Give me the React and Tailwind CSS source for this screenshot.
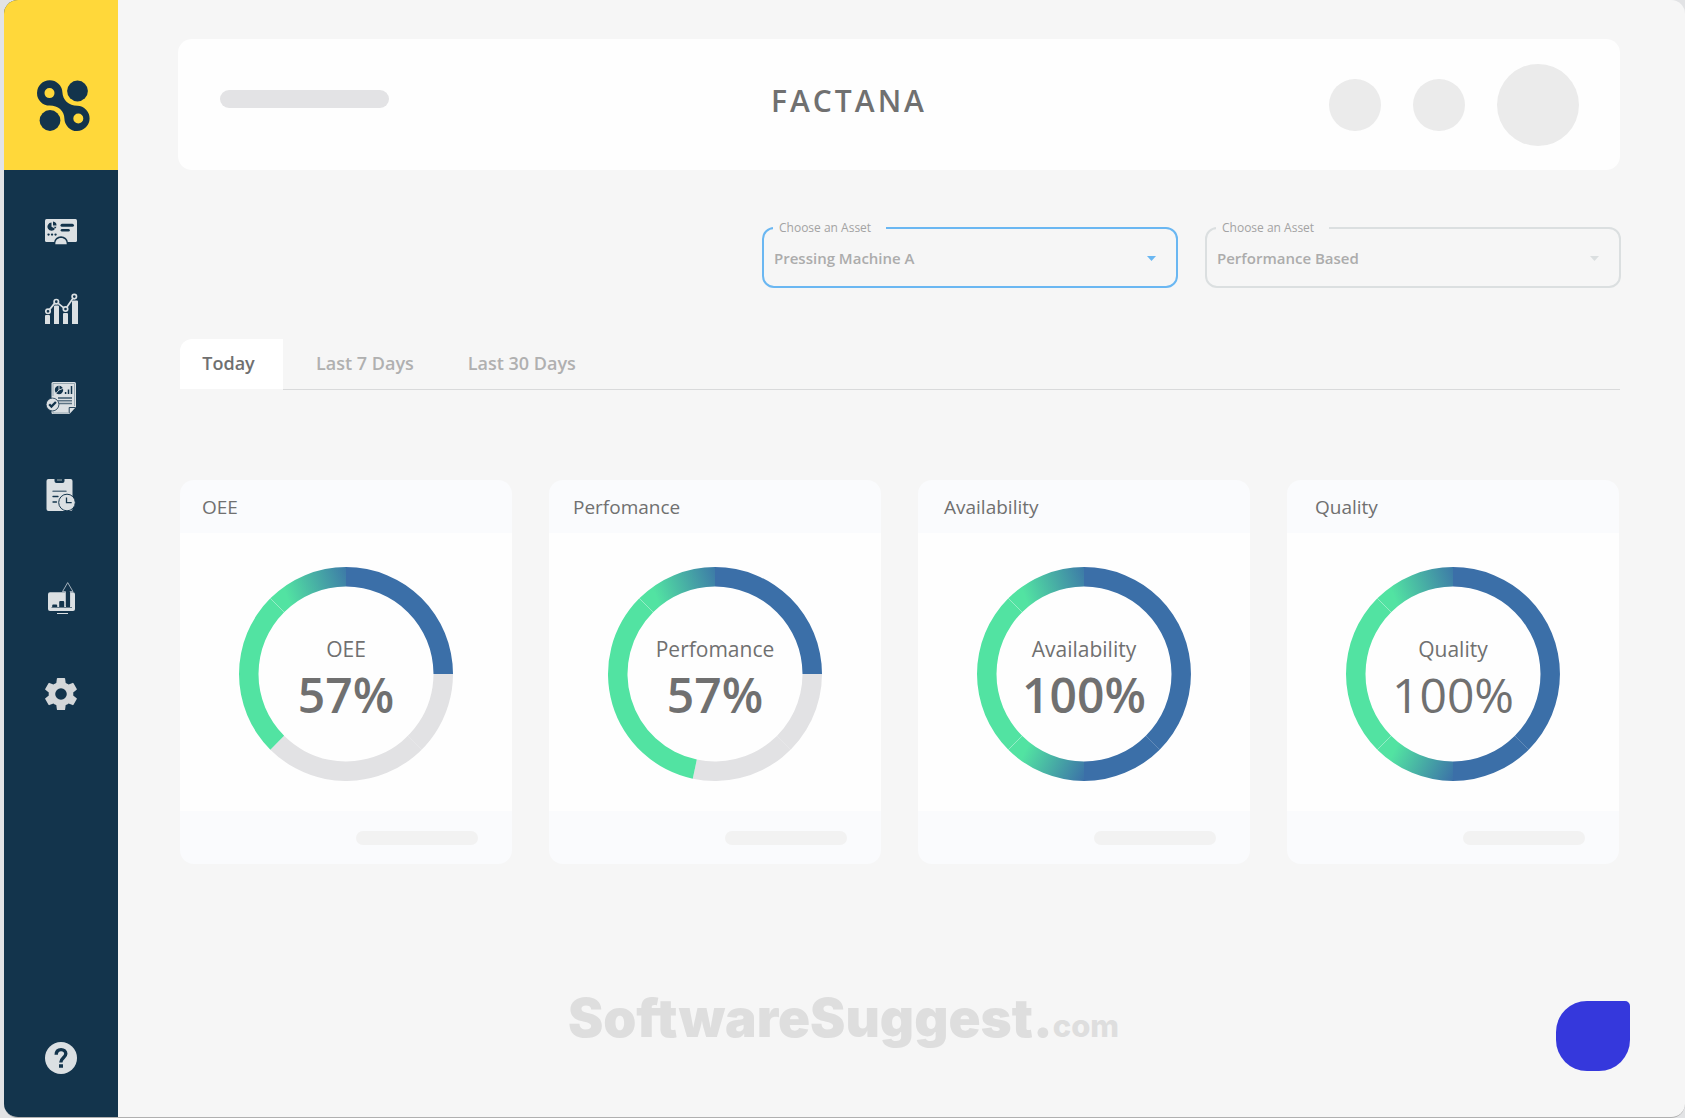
import React, { useState } from "react";

const NAVY = "#13344c";
const LIGHT = "#dbe0e3";

function Logo() {
  return (
    <svg viewBox="0 0 56 52" className="h-[52px] w-[56px]" aria-hidden="true">
      <g fill={NAVY}>
        <path
          fillRule="evenodd"
          d="M13.7 .2a12.7 12.7 0 0 1 12.7 12c.3 7.8 6.5 13.6 14.9 13.6a12.6 12.6 0 1 1-12.9 12.8c0-7.8-6.500-13-14.7-13A12.7 12.7 0 0 1 13.700 .2ZM13.500 8.100a5 5 0 1 0 0 10a5 5 0 0 0 0-10ZM42.300 33.500a5 5 0 1 0 0 10a5 5 0 0 0 0-10Z"
        />
        <circle cx="41.500" cy="11" r="10.400" />
        <circle cx="14" cy="40.500" r="10.400" />
      </g>
    </svg>
  );
}

function DashboardIcon() {
  return (
    <svg viewBox="0 0 32 32" className="size-8" aria-hidden="true">
      <path fill={LIGHT} d="M1.500 3h29Q32 3 32 4.500v20Q32 26 30.500 26h-29Q0 26 0 24.500v-20Q0 3 1.500 3Z" />
      <path fill={NAVY} d="M9.200 26a6.800 5.800 0 0 1 13.600 0v3H9.200Z" />
      <path fill={LIGHT} d="M10.300 28.200c0-4 2.300-6.200 5.700-6.200s5.700 2.200 5.700 6.200Z" />
      <path fill={NAVY} d="M6.500 6.600v4.200l3.600 2A4.100 4.100 0 1 1 6.500 6.600Z" />
      <path fill={NAVY} d="M8 5.600a3.900 3.900 0 0 1 3.500 3.900L8 9.600Z" />
      <path fill={NAVY} d="m8.300 10.700 3.100.1-.8 1.700Z" />
      <g stroke={NAVY} strokeLinecap="round" fill="none">
        <path strokeWidth="3" d="M17 9.300h10.400" />
        <path strokeWidth="2.600" d="M17 14.300h6.500" />
        <path strokeWidth="2.300" d="M3.500 18.600h.1M7 18.600h.1M10.500 18.600h.1" />
      </g>
    </svg>
  );
}

function TrendIcon() {
  return (
    <svg viewBox="0 0 33 32" className="h-8 w-[33px]" aria-hidden="true">
      <g fill={LIGHT}>
        <path d="M0 31v-8q0-1 1-1h3q1 0 1 1v8ZM9 31V13.500q0-1 1-1h3q1 0 1 1V31ZM18 31V21q0-1 1-1h3q1 0 1 1v10ZM27 31V8.500q0-1 1-1h4q1 0 1 1V31Z" />
      </g>
      <g fill="none" stroke={LIGHT} strokeWidth="1.700">
        <path d="m4.500 16.600 5.200-6.500M13.200 10.300l5.600 4.500M21.800 14.300l6.200-9" />
        <circle cx="3" cy="18.300" r="2.200" />
        <circle cx="11.300" cy="8.700" r="2.200" />
        <circle cx="20.500" cy="16" r="2.200" />
        <circle cx="29.300" cy="3.600" r="2.200" />
      </g>
    </svg>
  );
}

function ReportIcon() {
  return (
    <svg viewBox="0 0 32 32" className="size-8" aria-hidden="true">
      <path fill={LIGHT} d="M8 0h21.500Q31 0 31 1.500V25l-6.500 7H8q-1.500 0-1.500-1.500v-29Q6.500 0 8 0Z" />
      <path fill="none" stroke="#8799a5" strokeWidth=".8" d="M8 14V1.500h21.500V24M8 29.500V31h15" />
      <path fill="none" stroke={NAVY} strokeWidth=".9" d="M24.200 31.500v-6h6.300" />
      <circle cx="14" cy="8" r="4.200" fill={NAVY} />
      <path stroke={LIGHT} strokeWidth=".9" fill="none" d="M14 3.500V8l4.200-1.600M14 8l-3 3.300" />
      <path stroke={NAVY} strokeWidth="1.500" d="M20.600 12v-2M23.500 12V7.500M26.500 12V4" />
      <path stroke="#5c7384" strokeWidth="1.900" d="M13 16h14" />
      <path stroke="#5c7384" strokeWidth="1.500" d="M13 18.700h14M14 21.500h13" />
      <circle cx="7.500" cy="22.500" r="6.400" fill={LIGHT} stroke={NAVY} strokeWidth=".8" />
      <path fill="none" stroke={NAVY} strokeWidth="2.300" d="m4.200 22.300 2.200 2.200 4.500-4.500" />
    </svg>
  );
}

function ScheduleIcon() {
  return (
    <svg viewBox="0 0 32 32" className="size-8" aria-hidden="true">
      <path fill={LIGHT} d="M3.500 0h22Q27.500 0 27.500 2v28q0 2-2 2h-22q-2 0-2-2V2Q1.500 0 3.500 0Z" />
      <path fill={NAVY} d="M9.500 0h10v2q0 2-2 2h-6Q9.500 4 9.500 2Z" />
      <path stroke="#71868f" strokeWidth="1.500" d="M12 1h5" />
      <g stroke={NAVY} strokeLinecap="round">
        <path strokeWidth="1.500" d="M8 12.200h13" stroke="#5c7384" />
        <path strokeWidth="1.300" d="M8 17.500h5M8 23h3.500" />
      </g>
      <circle cx="22" cy="23.500" r="8.300" fill={LIGHT} stroke={NAVY} strokeWidth="1" />
      <path fill="none" stroke={NAVY} strokeWidth="1.300" d="M21.500 18.500v5.200h5.200" />
    </svg>
  );
}

function GrowthIcon() {
  return (
    <svg viewBox="0 0 32 32" className="size-8" aria-hidden="true">
      <rect x="3" y="10.300" width="27" height="18.700" rx="2" fill={LIGHT} />
      <path fill={NAVY} stroke="#b5c0c8" strokeWidth=".9" d="M20.500 24V9.600h-3L22.700.6l5.300 9h-3V24Z" />
      <path fill={NAVY} d="M7.200 25v-1.500q0-1 1-1h3q1 0 1 1V25ZM14.200 25v-5q0-1 1-1h3q1 0 1 1v5ZM21 25V10h4v15Z" />
      <path stroke="#647a89" strokeWidth="1" d="M6.500 25.500h20.500" />
      <path stroke={LIGHT} strokeWidth="1" d="M12 31.500h11" />
    </svg>
  );
}

function GearIcon() {
  return (
    <svg viewBox="0 0 32 32" className="size-8" aria-hidden="true">
      <path
        fill="#d4d7d9"
        fillRule="evenodd"
        d="M12.600 0h6.800q.6 0 .7.600l.6 4.300q1.600.6 2.900 1.600l4-1.600q.6-.2.900.3l3.300 5.700q.3.500-.2.900l-3.400 2.600q.2 1.600 0 3.200l3.400 2.600q.5.400.2.900l-3.300 5.700q-.3.500-.9.300l-4-1.600q-1.300 1-2.900 1.600l-.6 4.300q-.1.600-.7.600h-6.800q-.6 0-.7-.6l-.6-4.300q-1.600-.6-2.900-1.600l-4 1.600q-.6.200-.9-.3L.2 21.100q-.3-.5.200-.9l3.400-2.600q-.2-1.600 0-3.200L.4 11.800q-.5-.4-.2-.9l3.300-5.700q.3-.5.900-.3l4 1.600q1.300-1 2.900-1.600l.6-4.300q.1-.6.700-.6ZM16 10.200a5.800 5.800 0 1 0 0 11.600a5.800 5.800 0 0 0 0-11.600Z"
      />
    </svg>
  );
}

function HelpIcon() {
  return (
    <svg viewBox="0 0 32 32" className="size-8" aria-hidden="true">
      <circle cx="16" cy="16" r="16" fill={LIGHT} />
      <path fill="none" stroke={NAVY} strokeWidth="3.400" d="M11.200 12.800c0-3.300 2-5.200 4.900-5.200c2.800 0 4.700 1.700 4.700 4.200c0 3.900-5 4.300-5 8.700" />
      <path fill={NAVY} d="M14 22.200h4v3.500h-4Z" />
    </svg>
  );
}

const NAV = [
  { label: "Dashboard", Icon: DashboardIcon, gap: "mt-[46px]" },
  { label: "Trends", Icon: TrendIcon, gap: "mt-[45px]" },
  { label: "Reports", Icon: ReportIcon, gap: "mt-[57px]" },
  { label: "Schedule", Icon: ScheduleIcon, gap: "mt-[65px]" },
  { label: "Growth", Icon: GrowthIcon, gap: "mt-[71px]" },
  { label: "Settings", Icon: GearIcon, gap: "mt-[64px]" },
];

function Sidebar() {
  return (
    <aside className="flex w-[114px] shrink-0 flex-col items-center bg-[#13344c]">
      <div className="flex h-[170px] w-full items-end justify-center bg-[#ffd83a] pb-[38px] pl-[6px]">
        <Logo />
      </div>
      <nav className="flex flex-1 flex-col items-center">
        {NAV.map(({ label, Icon, gap }) => (
          <button key={label} type="button" aria-label={label} className={gap}>
            <Icon />
          </button>
        ))}
      </nav>
      <button type="button" aria-label="Help" className="mb-[43px]">
        <HelpIcon />
      </button>
    </aside>
  );
}

function Header() {
  return (
    <header className="mr-px flex h-[131px] items-center justify-between rounded-[14px] bg-[#fefefe] pr-[41px] pl-[42px]">
      <div className="mb-3 h-[18px] w-[169px] rounded-full bg-[#e3e3e5]" />
      <h1 className="mr-5 mb-2 text-[30px] leading-10 font-semibold tracking-widest text-[#707070]">FACTANA</h1>
      <div className="flex items-center gap-8">
        <div className="size-[52px] rounded-full bg-[#ebebeb]" />
        <div className="size-[52px] rounded-full bg-[#ebebeb]" />
        <div className="size-[82px] rounded-full bg-[#ebebeb]" />
      </div>
    </header>
  );
}

function AssetSelect({ id, value, active }) {
  return (
    <fieldset
      className={`h-[68px] w-[416px] min-w-0 rounded-[12px] border-2 pl-[9px] ${active ? "border-[#6ab7f2]" : "border-[#dbdfe0]"}`}
    >
      <legend className="w-[113px] pl-[6px] text-[12px] leading-4 text-[#a3a3a3]">
        <label htmlFor={id}>Choose an Asset</label>
      </legend>
      <div className="flex items-center pr-5">
        <select
          id={id}
          defaultValue={value}
          className="h-11 flex-1 appearance-none bg-transparent pl-px text-[15px] font-semibold text-[#acacac] outline-none"
        >
          <option>{value}</option>
        </select>
        <svg viewBox="0 0 9 5" className={`h-[5px] w-[9px] ${active ? "text-[#6ab7f2]" : "text-[#dbdfe0]"}`} aria-hidden="true">
          <path d="M0 0h9L4.500 5Z" fill="currentColor" />
        </svg>
      </div>
    </fieldset>
  );
}

function Tabs() {
  const [tab, setTab] = useState("Today");
  const rest = ["Last 7 Days", "Last 30 Days"];
  const look = (name) => (tab === name ? "text-[#707070]" : "text-[#b0b0b0]");
  return (
    <div role="tablist" className="mt-[51px] mr-px flex items-start pl-[2px] text-[18px] font-semibold">
      <button
        type="button"
        role="tab"
        aria-selected={tab === "Today"}
        onClick={() => setTab("Today")}
        className={`h-[50px] w-[103px] rounded-tl-[12px] bg-white pr-[6px] pb-[2px] ${look("Today")}`}
      >
        Today
      </button>
      <div className="flex h-[51px] flex-1 gap-[54px] border-b border-[#d9dadb] pl-[33px]">
        {rest.map((name) => (
          <button
            key={name}
            type="button"
            role="tab"
            aria-selected={tab === name}
            onClick={() => setTab(name)}
            className={`pb-[2px] ${look(name)}`}
          >
            {name}
          </button>
        ))}
      </div>
    </div>
  );
}

const GREEN = "#52e3a2";
const BLUE = "#3b6fa8";
const GREY = "#e2e2e4";

function point(radius, degrees) {
  const a = (degrees * Math.PI) / 180;
  return `${(107 + radius * Math.sin(a)).toFixed(2)} ${(107 - radius * Math.cos(a)).toFixed(2)}`;
}

function arc(from, to) {
  const large = to - from > 180 ? 1 : 0;
  return `M${point(107, from)}A107 107 0 ${large} 1 ${point(107, to)}L${point(87.5, to)}A87.500 87.500 0 ${large} 0 ${point(87.5, from)}Z`;
}

function Ring({ id, full, greenFrom }) {
  return (
    <svg viewBox="0 0 214 214" className="col-start-1 row-start-1 size-[214px]" aria-hidden="true">
      <defs>
        <linearGradient id={`${id}-top`} gradientUnits="userSpaceOnUse" x1="48" y1="30" x2="116" y2="6">
          <stop offset="0" stopColor={GREEN} />
          <stop offset="1" stopColor={BLUE} />
        </linearGradient>
        <linearGradient id={`${id}-bottom`} gradientUnits="userSpaceOnUse" x1="48" y1="184" x2="108" y2="214">
          <stop offset="0" stopColor={GREEN} />
          <stop offset="1" stopColor={BLUE} />
        </linearGradient>
      </defs>
      <path d={arc(0, full ? 180 : 90)} fill={BLUE} />
      {full ? (
        <path d={arc(180, 225)} fill={`url(#${id}-bottom)`} />
      ) : (
        <path d={arc(90, greenFrom)} fill={GREY} />
      )}
      <path d={arc(greenFrom, 315)} fill={GREEN} />
      <path d={arc(315, 360)} fill={`url(#${id}-top)`} />
      <g stroke="#fff" strokeOpacity=".4" strokeWidth=".5">
        <path d={`M${point(87.5, 315)}L${point(107, 315)}`} />
        <path d={`M${point(87.5, 135)}L${point(107, 135)}`} />
        <path d={`M${point(87.5, 225)}L${point(107, 225)}`} strokeOpacity={full ? ".4" : "0"} />
      </g>
    </svg>
  );
}

const METRICS = [
  { name: "OEE", value: "57%", full: false, greenFrom: 225, pad: "pl-[22px]", weight: "font-semibold" },
  { name: "Perfomance", value: "57%", full: false, greenFrom: 192, pad: "pl-6", weight: "font-semibold" },
  { name: "Availability", value: "100%", full: true, greenFrom: 225, pad: "pl-[26px]", weight: "font-semibold" },
  { name: "Quality", value: "100%", full: true, greenFrom: 225, pad: "pl-7", weight: "font-normal" },
];

function MetricCard({ name, value, full, greenFrom, pad, weight }) {
  return (
    <article className="overflow-hidden rounded-[14px] bg-[#fafbfd] text-[#707070]">
      <h2 className={`flex h-[53px] items-center pt-[2px] text-[19px] ${pad}`}>{name}</h2>
      <div className="grid h-[278px] place-items-center bg-[#fefefe] pt-1">
        <Ring id={name} full={full} greenFrom={greenFrom} />
        <div className="col-start-1 row-start-1 flex flex-col items-center pt-[14px]">
          <span className="text-[21px] leading-7">{name}</span>
          <span className={`text-[48px] leading-[64px] ${weight}`}>{value}</span>
        </div>
      </div>
      <div className="flex h-[53px] items-center justify-end pr-[34px]">
        <div className="h-[14px] w-[122px] rounded-full bg-[#f2f2f2]" />
      </div>
    </article>
  );
}

export default function App() {
  return (
    <div className="min-h-screen bg-[#e2e3e5] pl-1 font-['Open_Sans','Noto_Sans',sans-serif]">
      <div className="relative flex min-h-screen overflow-hidden rounded-[14px] border-b border-[#b0b0b0] bg-[#f6f6f6]">
        <Sidebar />
        <main className="min-w-0 flex-1 pt-[39px] pr-16 pl-[60px]">
          <Header />
          <div className="mt-[50px] flex justify-end gap-[27px]">
            <AssetSelect id="asset" value="Pressing Machine A" active />
            <AssetSelect id="basis" value="Performance Based" />
          </div>
          <Tabs />
          <section className="mt-[90px] mr-[2px] grid grid-cols-4 gap-[37px] pl-[2px]">
            {METRICS.map((m) => (
              <MetricCard key={m.name} {...m} />
            ))}
          </section>
          <p className="mt-[122px] mr-[112px] text-center font-['Inter',sans-serif] text-[53px] leading-[64px] font-black text-[#dedede]">
            SoftwareSuggest.<span className="text-[31px] font-extrabold">com</span>
          </p>
        </main>
        <button
          type="button"
          aria-label="Open chat"
          className="absolute right-[55px] bottom-[46px] h-[70px] w-[74px] rounded-[31px] rounded-tr-[5px] bg-[#3538dc]"
        />
      </div>
    </div>
  );
}
